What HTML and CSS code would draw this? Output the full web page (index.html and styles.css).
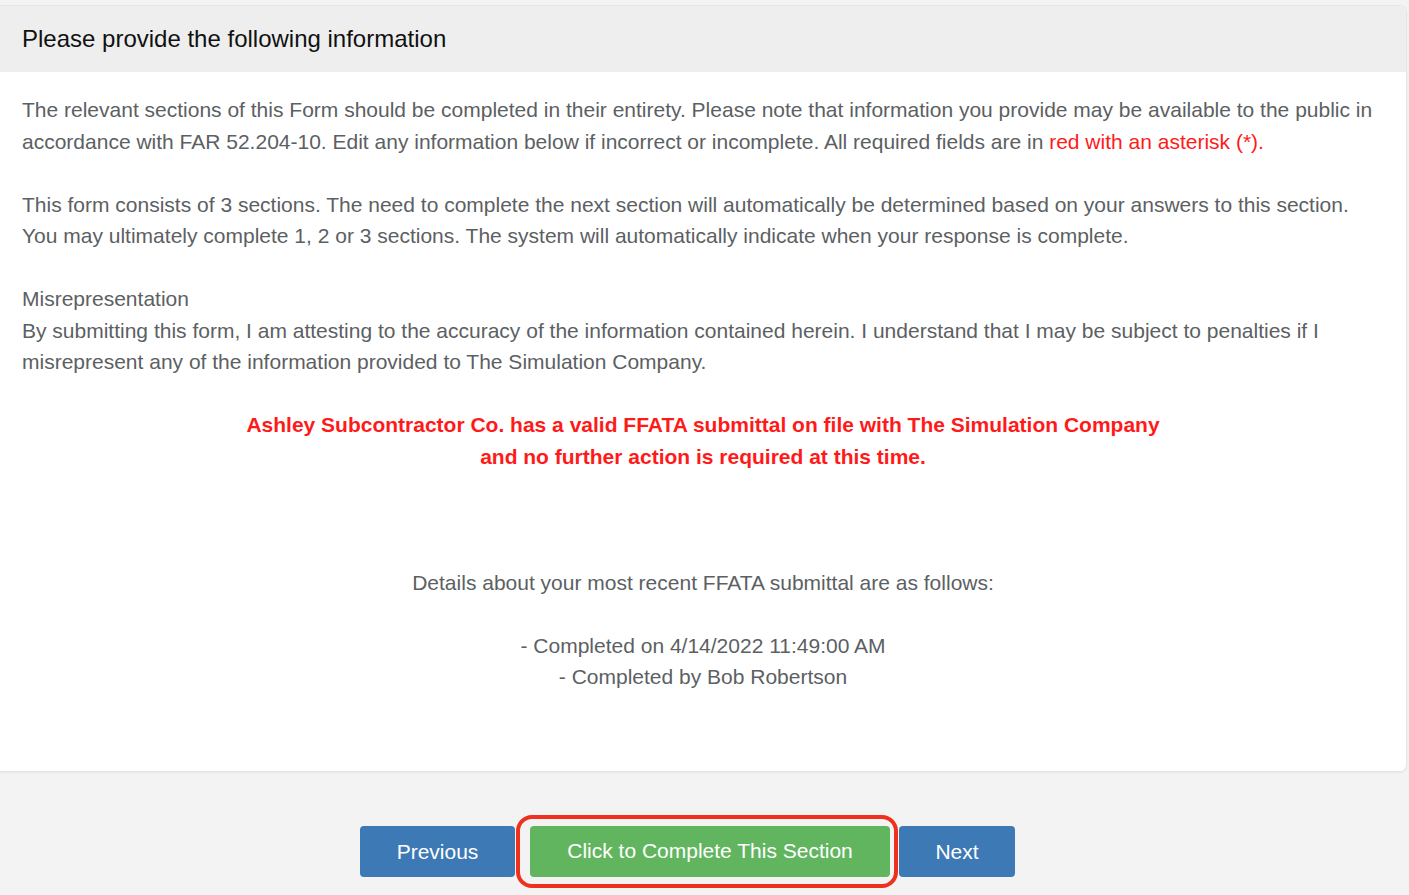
FILE: index.html
```html
<!DOCTYPE html>
<html lang="en">
<head>
<meta charset="utf-8">
<title>FFATA Form</title>
<link rel="stylesheet" href="styles.css">
</head>
<body>
<div class="panel">
  <div class="panel-heading">Please provide the following information</div>
  <div class="panel-body">
    <p>The relevant sections of this Form should be completed in their entirety. Please note that information you provide may be available to the public in accordance with FAR 52.204-10. Edit any information below if incorrect or incomplete. All required fields are in <span class="req">red with an asterisk (*).</span></p>
    <p>This form consists of 3 sections. The need to complete the next section will automatically be determined based on your answers to this section. You may ultimately complete 1, 2 or 3 sections. The system will automatically indicate when your response is complete.</p>
    <p>Misrepresentation<br>By submitting this form, I am attesting to the accuracy of the information contained herein. I understand that I may be subject to penalties if I misrepresent any of the information provided to The Simulation Company.</p>
    <p class="notice">Ashley Subcontractor Co. has a valid FFATA submittal on file with The Simulation Company<br>and no further action is required at this time.</p>
    <p class="details">Details about your most recent FFATA submittal are as follows:</p>
    <p class="details">- Completed on 4/14/2022 11:49:00 AM<br>- Completed by Bob Robertson</p>
  </div>
</div>
<div class="actions">
  <button class="btn btn-blue btn-prev">Previous</button>
  <div class="highlight"><button class="btn btn-green">Click to Complete This Section</button></div>
  <button class="btn btn-blue btn-next">Next</button>
</div>
</body>
</html>
```
FILE: styles.css
```css
html, body {
  margin: 0;
  padding: 0;
}
body {
  background: #f3f3f3;
  font-family: "Liberation Sans", Arial, Helvetica, sans-serif;
  color: #5c5f63;
}
.panel {
  margin: 5px 2px 0 0;
  background: #fff;
  border: 1px solid #e6e6e6;
  border-left: none;
  border-radius: 0 7px 7px 0;
  box-shadow: 0 1px 2px rgba(0, 0, 0, 0.05);
  overflow: hidden;
}
.panel-heading {
  background: #eeeeee;
  height: 66px;
  display: flex;
  align-items: center;
  padding: 0 22px;
  font-size: 24px;
  color: #111;
}
.panel-body {
  padding: 22px 22px 78px;
  font-size: 21px;
  line-height: 31.5px;
}
.panel-body p {
  margin: 0 0 31.5px;
}
.panel-body p:last-child {
  margin-bottom: 0;
}
.req {
  color: #ff1a1a;
}
.notice {
  text-align: center;
  color: #ff1a1a;
  font-weight: bold;
}
.panel-body p.notice {
  margin-bottom: 94.5px;
}
.details {
  text-align: center;
}
.actions {
  display: flex;
  justify-content: center;
  align-items: center;
  padding: 43px 34px 0 0;
}
.btn {
  font-family: "Liberation Sans", Arial, Helvetica, sans-serif;
  font-size: 21px;
  color: #fff;
  border: none;
  border-radius: 4px;
  height: 51px;
  padding: 0;
  cursor: pointer;
}
.btn-blue {
  background: #3d79b4;
}
.btn-prev {
  width: 155px;
}
.btn-next {
  width: 116px;
}
.btn-green {
  background: #62b55f;
  width: 360px;
}
.highlight {
  position: relative;
  padding: 11px 9px 12px 15px;
}
.highlight::after {
  content: "";
  position: absolute;
  top: 0;
  bottom: 1px;
  left: 1px;
  right: 1px;
  border: 4px solid #f0301f;
  border-radius: 16px;
  pointer-events: none;
}
```
